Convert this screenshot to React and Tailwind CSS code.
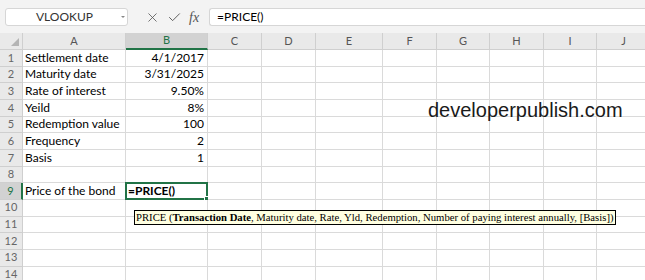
import { X, Check } from 'lucide-react'

const cols = [
  { k: 'A', w: 103 },
  { k: 'B', w: 82 },
  { k: 'C', w: 54 },
  { k: 'D', w: 54 },
  { k: 'E', w: 67 },
  { k: 'F', w: 54 },
  { k: 'G', w: 53 },
  { k: 'H', w: 54 },
  { k: 'I', w: 53 },
  { k: 'J', w: 54 },
]

const data = [
  ['Settlement date', '4/1/2017'],
  ['Maturity date', '3/31/2025'],
  ['Rate of interest', '9.50%'],
  ['Yeild', '8%'],
  ['Redemption value', '100'],
  ['Frequency', '2'],
  ['Basis', '1'],
  ['', ''],
  ['Price of the bond', '=PRICE()'],
  ['', ''],
  ['', ''],
  ['', ''],
  ['', ''],
  ['', ''],
]

const cellFont = { fontFamily: 'Lato, "Open Sans", sans-serif' }

function FormulaBar() {
  return (
    <div className="flex h-[33px] bg-[#f3f3f3] pt-[8px]">
      <div className="ml-[5px] flex h-[18px] w-[123px] items-center rounded-[3px] border border-[#d6d6d6] bg-white">
        <span className="flex-1 pl-[2px] text-center text-[12px] text-[#333]" style={cellFont}>VLOOKUP</span>
        <span className="mr-[2px] h-0 w-0 border-x-[2px] border-t-[2px] border-x-transparent border-t-[#888]" />
      </div>
      <div className="ml-[17px] flex h-[18px] items-center gap-[7px] text-[#555]">
        <X size={15} strokeWidth={1.3} />
        <Check size={15} strokeWidth={1.5} />
        <span className="text-[14px] italic text-[#555]" style={{ fontFamily: '"Liberation Serif", serif' }}>fx</span>
      </div>
      <div className="ml-[10px] flex h-[18px] flex-1 items-center rounded-l-[3px] border border-r-0 border-[#d6d6d6] bg-white pl-[7px]">
        <span className="text-[12px] text-black" style={cellFont}>=PRICE()</span>
      </div>
    </div>
  )
}

function HeaderRow() {
  return (
    <div className="flex h-[17px] bg-[#e9e9e9]">
      <div className="relative w-[23px] shrink-0 border-r border-b border-[#cfcfcf]">
        <svg className="absolute bottom-[3px] right-[3px]" width="8" height="8" viewBox="0 0 8 8">
          <polygon points="8,0 8,8 0,8" fill="#b4b4b4" />
        </svg>
      </div>
      {cols.map(c => (
        <div
          key={c.k}
          style={{ width: c.w, ...cellFont }}
          className={
            c.k === 'B'
              ? 'flex shrink-0 items-center justify-center border-r border-b-2 border-r-[#cfcfcf] border-b-[#217346] bg-[#d2d2d2] text-[11px] text-[#217346]'
              : 'flex shrink-0 items-center justify-center border-r border-b border-[#cfcfcf] text-[11px] text-[#555]'
          }
        >
          {c.k}
        </div>
      ))}
    </div>
  )
}

function Row({ n, a, b }) {
  const active = n === 9
  return (
    <div className="flex h-[16.67px]">
      <div
        style={cellFont}
        className={
          active
            ? 'flex w-[23px] shrink-0 items-center justify-center border-r-2 border-b border-r-[#217346] border-b-[#cfcfcf] bg-[#d2d2d2] text-[11px] text-[#217346]'
            : 'flex w-[23px] shrink-0 items-center justify-center border-r border-b border-[#cfcfcf] bg-[#e9e9e9] text-[11px] text-[#666]'
        }
      >
        {n}
      </div>
      {cols.map(c => {
        let content = null
        if (c.k === 'A') content = <span className="pl-[2px]">{a}</span>
        if (c.k === 'B' && !active) content = <span className="ml-auto pr-[3px]">{b}</span>
        if (c.k === 'B' && active) content = (
          <div className="absolute inset-[-1px] flex items-center border-2 border-[#217346] pl-[1px] font-bold">
            {b}
            <span className="absolute bottom-[-3px] right-[-3px] h-[5px] w-[5px] border border-white bg-[#217346]" />
          </div>
        )
        return (
          <div
            key={c.k}
            style={{ width: c.w, ...cellFont }}
            className="relative flex shrink-0 items-center whitespace-nowrap border-r border-b border-[#dadada] text-[12px] text-black"
          >
            {content}
          </div>
        )
      })}
    </div>
  )
}

export default function App() {
  return (
    <div className="relative h-[280px] w-[645px] overflow-hidden bg-white">
      <FormulaBar />
      <HeaderRow />
      {data.map((r, i) => (
        <Row key={i} n={i + 1} a={r[0]} b={r[1]} />
      ))}

      <div
        className="absolute left-[428px] top-[98px] text-[20px] leading-[24px] text-[#1a1a1a]"
        style={{ fontFamily: '"Liberation Sans", Arial, sans-serif' }}
      >
        developerpublish.com
      </div>

      <div
        className="absolute left-[134px] top-[210px] whitespace-nowrap border border-black bg-[#ffffe1] px-[1px] text-[10.7px] leading-[13px] text-black"
        style={{ fontFamily: '"Liberation Serif", "Times New Roman", serif' }}
      >
        PRICE (<b>Transaction Date</b>, Maturity date, Rate, Yld, Redemption, Number of paying interest annually, [Basis])
      </div>
    </div>
  )
}
